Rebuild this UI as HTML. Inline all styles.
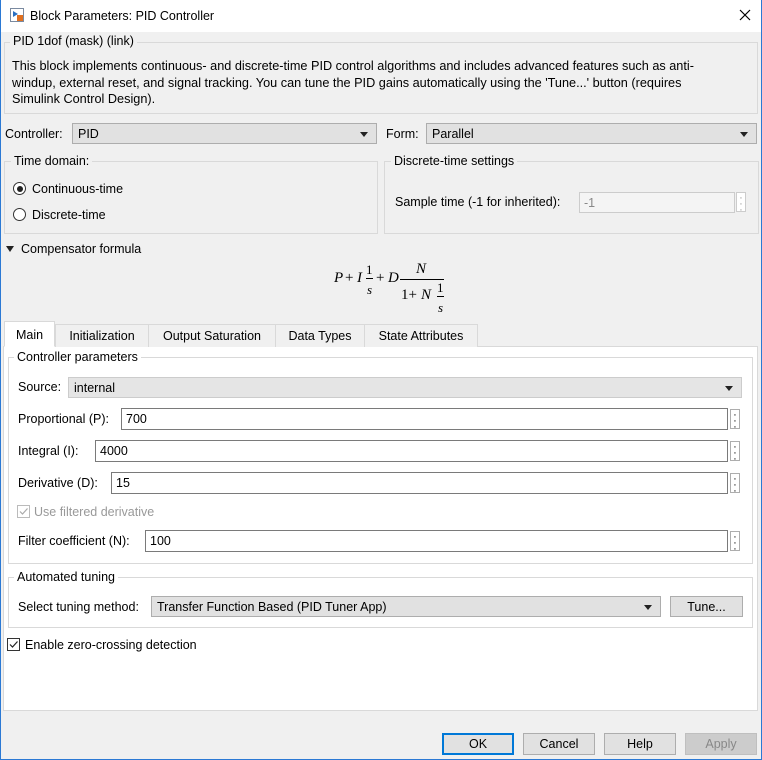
<!DOCTYPE html>
<html><head><style>
*{box-sizing:border-box;margin:0;padding:0}
body{width:762px;height:760px;background:#f0f0f0;font-family:"Liberation Sans",sans-serif;font-size:12.5px;color:#000;position:relative;overflow:hidden}
.a{position:absolute;white-space:nowrap}
.t{line-height:16px}
.grp{position:absolute;border:1px solid #d9d9d9}
.lg{position:absolute;background:#f0f0f0;padding:0 3px;line-height:16px}
.wl{background:#fff}
.dd{position:absolute;background:#e1e1e1;border:1px solid #adadad;height:21px;line-height:21px;padding-left:5px}
.dd:after{content:"";position:absolute;right:8px;top:8px;border-left:4px solid transparent;border-right:4px solid transparent;border-top:5px solid #222}
.in{position:absolute;background:#fff;border:1px solid #7a7a7a;height:22px;line-height:21px;padding-left:4px}
.dots{position:absolute;width:10px;height:20px;border:1px solid #adadad;background:#fff;text-align:center;font-size:11px;line-height:6px;padding-top:2px}
.btn{position:absolute;height:22px;width:72px;background:#e1e1e1;border:1px solid #adadad;text-align:center;line-height:21px}
.tab{position:absolute;top:324px;height:23px;border:1px solid #d9d9d9;border-bottom:none;background:#f0f0f0;line-height:22px;text-align:center}
.rad{position:absolute;width:13px;height:13px;border:1px solid #333;border-radius:50%;background:#fff}
.cb{position:absolute;width:13px;height:13px;border:1px solid #333;background:#fff}
.m{font-family:"Liberation Serif",serif;font-style:italic;font-size:15px;position:absolute;line-height:15px}
.mn{font-family:"Liberation Serif",serif;font-size:15px;position:absolute;line-height:15px}
</style></head><body>
<div class="a" style="left:0;top:0;width:762px;height:32px;background:#fff"></div>
<div class="a" style="left:0;top:0;width:1px;height:760px;background:#2b79d4"></div>
<div class="a" style="right:0;top:0;width:1px;height:760px;background:#2b79d4"></div>
<div class="a" style="left:0;bottom:0;width:762px;height:1px;background:#2b79d4"></div>
<svg class="a" style="left:10px;top:8px" width="14" height="14"><rect x="0.5" y="0.5" width="13" height="13" fill="#fff" stroke="#7a8aa0"/><path d="M3 3 L8 6 L3 9Z" fill="#2a6fc0"/><rect x="7" y="7" width="6" height="6" fill="#e07020"/></svg>
<div class="a t" style="left:30px;top:8px">Block Parameters: PID Controller</div>
<svg class="a" style="left:739px;top:9px" width="12" height="12"><path d="M1 1L11 11M11 1L1 11" stroke="#000" stroke-width="1.2"/></svg>

<div class="grp" style="left:4px;top:42px;width:754px;height:72px"></div>
<div class="lg" style="left:10px;top:33px">PID 1dof (mask) (link)</div>
<div class="a" style="left:12px;top:58px;line-height:16.5px;width:706px;white-space:normal;font-size:12.7px">This block implements continuous- and discrete-time PID control algorithms and includes advanced features such as anti-windup, external reset, and signal tracking. You can tune the PID gains automatically using the 'Tune...' button (requires Simulink Control Design).</div>

<div class="a t" style="left:5px;top:126px">Controller:</div>
<div class="dd" style="left:72px;top:123px;width:305px">PID</div>
<div class="a t" style="left:386px;top:126px">Form:</div>
<div class="dd" style="left:426px;top:123px;width:331px">Parallel</div>

<div class="grp" style="left:4px;top:161px;width:374px;height:73px"></div>
<div class="lg" style="left:11px;top:153px">Time domain:</div>
<div class="rad" style="left:13px;top:182px"></div><div class="a" style="left:17px;top:186px;width:6px;height:6px;border-radius:50%;background:#222"></div>
<div class="a t" style="left:32px;top:181px">Continuous-time</div>
<div class="rad" style="left:13px;top:208px"></div>
<div class="a t" style="left:32px;top:207px">Discrete-time</div>

<div class="grp" style="left:384px;top:161px;width:375px;height:73px"></div>
<div class="lg" style="left:391px;top:153px">Discrete-time settings</div>
<div class="a t" style="left:395px;top:194px">Sample time (-1 for inherited):</div>
<div class="in" style="left:579px;top:192px;width:156px;height:21px;border-color:#ccc;background:#f4f4f4;color:#888;line-height:20px">-1</div>
<div class="dots" style="left:736px;top:192px;border-color:#ccc;color:#999">·<br>·<br>·</div>

<div class="a" style="left:6px;top:246px;border-left:4px solid transparent;border-right:4px solid transparent;border-top:6px solid #222"></div>
<div class="a t" style="left:21px;top:241px">Compensator formula</div>

<div class="m" style="left:334px;top:271px">P</div>
<div class="mn" style="left:345px;top:271px">+</div>
<div class="m" style="left:357px;top:271px">I</div>
<div class="mn" style="left:366px;top:262px;font-size:13px">1</div>
<div class="a" style="left:366px;top:278px;width:7px;height:1px;background:#000"></div>
<div class="m" style="left:367px;top:282px;font-size:13px">s</div>
<div class="mn" style="left:376px;top:271px">+</div>
<div class="m" style="left:388px;top:271px">D</div>
<div class="m" style="left:416px;top:262px">N</div>
<div class="a" style="left:400px;top:279px;width:44px;height:1px;background:#000"></div>
<div class="mn" style="left:401px;top:288px">1+</div>
<div class="m" style="left:421px;top:288px">N</div>
<div class="mn" style="left:437px;top:280px;font-size:13px">1</div>
<div class="a" style="left:437px;top:296px;width:7px;height:1px;background:#000"></div>
<div class="m" style="left:438px;top:300px;font-size:13px">s</div>

<div class="a" style="left:3px;top:346px;width:755px;height:365px;background:#fff;border:1px solid #d9d9d9"></div>
<div class="tab" style="left:4px;top:321px;height:26px;width:51px;background:#fff;line-height:27px;border-bottom:1px solid #fff">Main</div>
<div class="tab" style="left:55px;width:94px">Initialization</div>
<div class="tab" style="left:148px;width:128px">Output Saturation</div>
<div class="tab" style="left:275px;width:90px">Data Types</div>
<div class="tab" style="left:364px;width:114px">State Attributes</div>

<div class="grp" style="left:8px;top:357px;width:745px;height:207px"></div>
<div class="lg wl" style="left:14px;top:349px">Controller parameters</div>
<div class="a t" style="left:18px;top:379px">Source:</div>
<div class="dd" style="left:68px;top:377px;width:674px;height:21px;border-color:#ccc;background:#e5e5e5">internal</div>
<div class="a t" style="left:18px;top:411px">Proportional (P):</div>
<div class="in" style="left:121px;top:408px;width:607px">700</div>
<div class="dots" style="left:730px;top:409px">·<br>·<br>·</div>
<div class="a t" style="left:18px;top:443px">Integral (I):</div>
<div class="in" style="left:95px;top:440px;width:633px">4000</div>
<div class="dots" style="left:730px;top:441px">·<br>·<br>·</div>
<div class="a t" style="left:18px;top:475px">Derivative (D):</div>
<div class="in" style="left:111px;top:472px;width:617px">15</div>
<div class="dots" style="left:730px;top:473px">·<br>·<br>·</div>
<div class="cb" style="left:17px;top:505px;border-color:#bbb"></div>
<svg class="a" style="left:17px;top:505px" width="13" height="13"><path d="M3 6.5L5.5 9L10.5 3.5" stroke="#aaa" fill="none" stroke-width="1.2"/></svg>
<div class="a t" style="left:34px;top:504px;color:#999">Use filtered derivative</div>
<div class="a t" style="left:18px;top:533px">Filter coefficient (N):</div>
<div class="in" style="left:145px;top:530px;width:583px">100</div>
<div class="dots" style="left:730px;top:531px">·<br>·<br>·</div>

<div class="grp" style="left:8px;top:577px;width:745px;height:51px"></div>
<div class="lg wl" style="left:14px;top:569px">Automated tuning</div>
<div class="a t" style="left:18px;top:599px">Select tuning method:</div>
<div class="dd" style="left:151px;top:596px;width:510px">Transfer Function Based (PID Tuner App)</div>
<div class="btn" style="left:670px;top:596px;width:73px;height:21px;line-height:20px">Tune...</div>

<div class="cb" style="left:7px;top:638px"></div>
<svg class="a" style="left:7px;top:638px" width="13" height="13"><path d="M3 6.5L5.5 9L10.5 3.5" stroke="#222" fill="none" stroke-width="1.2"/></svg>
<div class="a t" style="left:25px;top:637px">Enable zero-crossing detection</div>

<div class="btn" style="left:442px;top:733px;border:2px solid #0078d7;line-height:19px">OK</div>
<div class="btn" style="left:523px;top:733px">Cancel</div>
<div class="btn" style="left:604px;top:733px">Help</div>
<div class="btn" style="left:685px;top:733px;background:#ccc;border-color:#bfbfbf;color:#888">Apply</div>
</body></html>
